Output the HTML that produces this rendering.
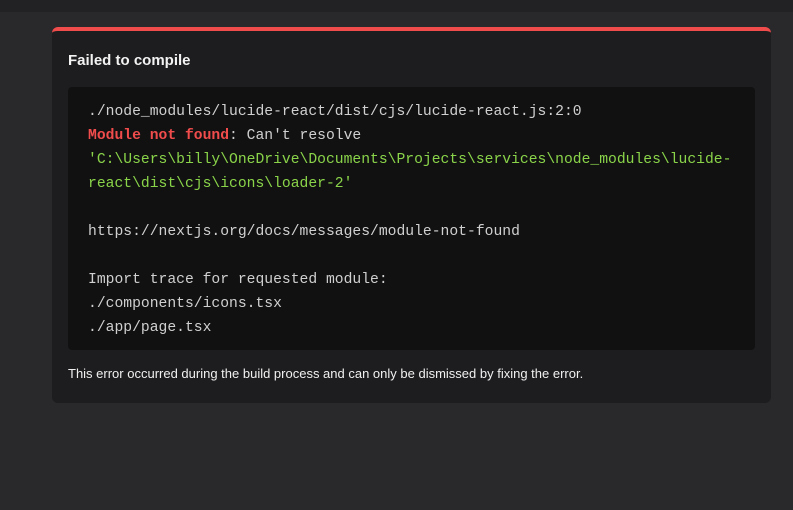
<!DOCTYPE html>
<html><head><style>
html,body{margin:0;padding:0;width:793px;height:510px;overflow:hidden;background:#29292c;}
.top{position:absolute;left:0;top:0;width:793px;height:12px;background:#222225;}
.card{position:absolute;left:52px;top:27px;width:719px;height:376px;background:#1d1d1f;border-radius:6px;border-top:4px solid #f14c4c;box-sizing:border-box;}
h1{position:absolute;left:16px;top:21px;margin:0;font:bold 15px "Liberation Sans",sans-serif;color:#f3f3f3;}
pre{position:absolute;left:16px;top:56px;width:687px;height:263px;margin:0;box-sizing:border-box;background:#111112;border-radius:4px;padding:13px 20px;font:14.7px/24px "Liberation Mono",monospace;color:#d0d0d0;white-space:pre;}
.r{color:#f14c4c;font-weight:bold}.g{color:#8ad449}
.f{position:absolute;left:16px;top:335px;font:13px "Liberation Sans",sans-serif;color:#f0f0f0;}
</style></head><body>
<div class="top"></div>
<div class="card">
<h1>Failed to compile</h1>
<pre>./node_modules/lucide-react/dist/cjs/lucide-react.js:2:0
<span class="r">Module not found</span>: Can't resolve
<span class="g">'C:\Users\billy\OneDrive\Documents\Projects\services\node_modules\lucide-
react\dist\cjs\icons\loader-2'</span>

https://nextjs.org/docs/messages/module-not-found

Import trace for requested module:
./components/icons.tsx
./app/page.tsx</pre>
<div class="f">This error occurred during the build process and can only be dismissed by fixing the error.</div>
</div>
</body></html>
